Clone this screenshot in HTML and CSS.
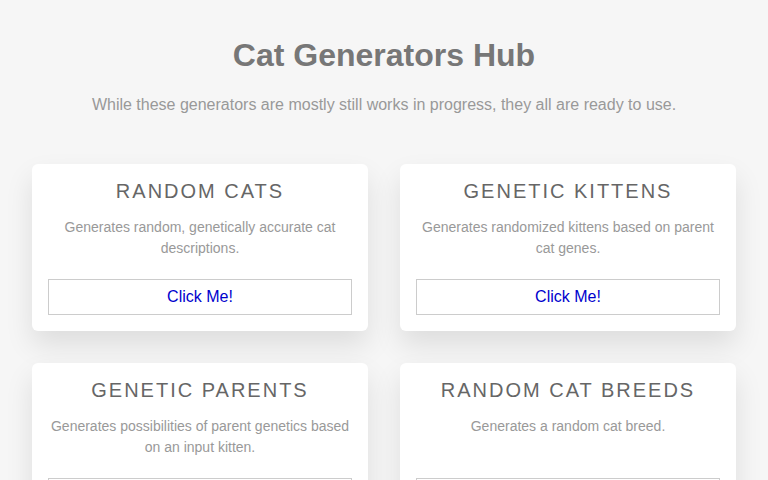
FILE: index.html
```html
<!DOCTYPE html>
<html lang="en">
<head>
<meta charset="utf-8">
<title>Cat Generators Hub</title>
<link rel="stylesheet" href="styles.css">
</head>
<body>
<header class="hero">
  <h1 class="hero-title">Cat Generators Hub</h1>
  <p class="hero-sub">While these generators are mostly still works in progress, they all are ready to use.</p>
</header>
<main class="grid">
  <section class="card">
    <h2 class="card-title">RANDOM CATS</h2>
    <p class="card-desc">Generates random, genetically accurate cat descriptions.</p>
    <button class="card-btn">Click Me!</button>
  </section>
  <section class="card">
    <h2 class="card-title">GENETIC KITTENS</h2>
    <p class="card-desc">Generates randomized kittens based on parent cat genes.</p>
    <button class="card-btn">Click Me!</button>
  </section>
  <section class="card">
    <h2 class="card-title">GENETIC PARENTS</h2>
    <p class="card-desc">Generates possibilities of parent genetics based on an input kitten.</p>
    <button class="card-btn">Click Me!</button>
  </section>
  <section class="card">
    <h2 class="card-title">RANDOM CAT BREEDS</h2>
    <p class="card-desc">Generates a random cat breed.</p>
    <button class="card-btn">Click Me!</button>
  </section>
</main>
</body>
</html>
```
FILE: styles.css
```css
html, body {
  margin: 0;
  padding: 0;
  background: #f6f6f6;
  font-family: "Liberation Sans", Arial, sans-serif;
}
.hero {
  text-align: center;
  padding-top: 37px;
}
.hero-title {
  margin: 0;
  font-size: 32px;
  line-height: 37px;
  font-weight: bold;
  color: #777;
}
.hero-sub {
  margin: 22px 0 0;
  font-size: 16px;
  line-height: 18px;
  color: #999;
}
.grid {
  display: grid;
  grid-template-columns: 1fr 1fr;
  gap: 32px;
  padding: 50px 32px 32px;
}
.card {
  background: #fff;
  border-radius: 6px;
  padding: 16px;
  display: flex;
  flex-direction: column;
  text-align: center;
  box-shadow: 0 14px 28px rgba(0, 0, 0, 0.1);
}
.card-title {
  margin: 0;
  font-size: 20px;
  line-height: 23px;
  font-weight: normal;
  letter-spacing: 2px;
  color: #666;
}
.card-desc {
  margin: 14px 0 20px;
  font-size: 14px;
  line-height: 21px;
  color: #999;
}
.card-btn {
  margin-top: auto;
  height: 36px;
  background: #fff;
  border: 1px solid #ccc;
  font-family: "Liberation Sans", Arial, sans-serif;
  font-size: 16px;
  color: #0000cd;
  cursor: pointer;
}
```
